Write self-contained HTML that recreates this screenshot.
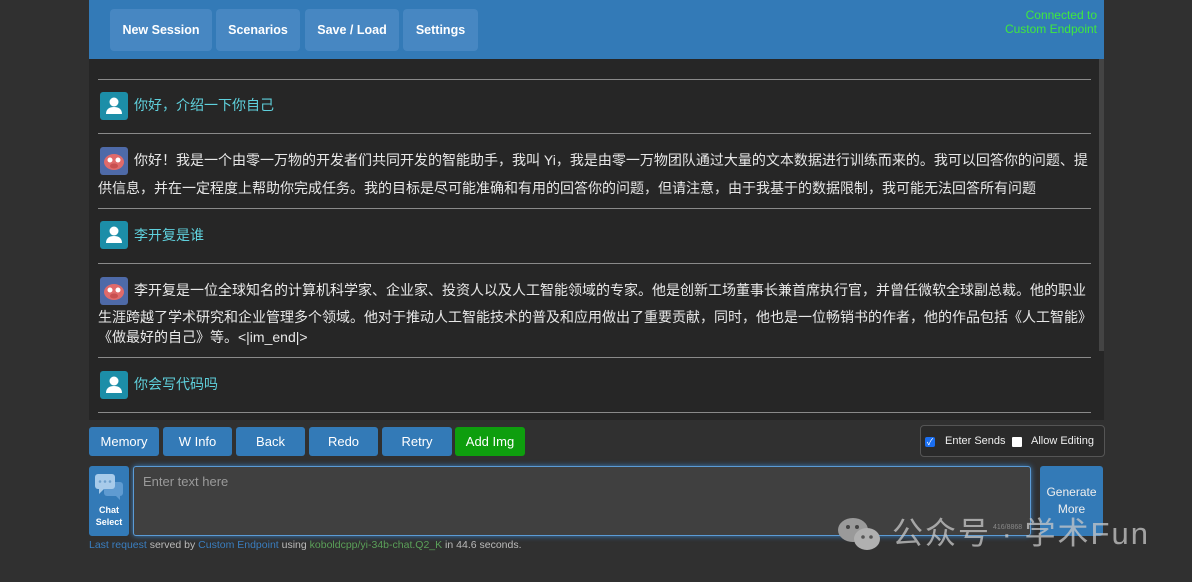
<!DOCTYPE html>
<html><head><meta charset="utf-8"><style>
*{margin:0;padding:0;box-sizing:border-box}
body{width:1192px;height:582px;background:#303030;font-family:"Liberation Sans","Noto Sans CJK SC",sans-serif;position:relative;overflow:hidden;color:#fff}
.a{position:absolute;white-space:nowrap}
.hdr{left:89px;top:0;width:1015px;height:59px;background:#337ab7}
.nb{top:9px;height:42px;background:#4787c2;border-radius:4px;color:#fff;font-weight:bold;font-size:12.5px;line-height:42px;text-align:center}
.chat{left:89px;top:59px;width:1015px;height:361px;background:#262626}
.hr{left:98px;width:993px;height:1px;background:#8a8a8a}
.t{font-size:14px;color:#e8e8e8;line-height:20px}
.u{font-size:14px;color:#5fd0dc;line-height:20px}
.av{width:28px;height:28px;border-radius:3px}
.ua{background:#1c8ea8}
.aa{background:#4e6aa8}
.bb{top:427px;height:29px;background:#337ab7;border-radius:3px;color:#fff;font-size:13px;line-height:29px;text-align:center}
</style></head><body>
<div class="a hdr"></div>
<div class="a nb" style="left:110px;width:102px">New Session</div>
<div class="a nb" style="left:216px;width:84px">Scenarios</div>
<div class="a nb" style="left:305px;width:94px">Save / Load</div>
<div class="a nb" style="left:403px;width:75px">Settings</div>
<div class="a" style="right:95px;top:8px;color:#3fe83f;font-size:12px;line-height:14px;text-align:right">Connected to<br>Custom Endpoint</div>
<div class="a chat"></div>
<div class="a" style="left:1099px;top:59px;width:5px;height:292px;background:#444"></div>
<div class="a hr" style="top:79px"></div>
<div class="a hr" style="top:133px"></div>
<div class="a hr" style="top:208px"></div>
<div class="a hr" style="top:263px"></div>
<div class="a hr" style="top:357px"></div>
<div class="a hr" style="top:412px"></div>

<svg class="a av ua" style="left:100px;top:92px" viewBox="0 0 28 28"><circle cx="14" cy="10" r="4.5" fill="#fff"/><path d="M6 22c0-5 3.5-7 8-7s8 2 8 7z" fill="#fff"/></svg>
<div class="a u" style="left:134px;top:95px">你好，介绍一下你自己</div>

<svg class="a av aa" style="left:100px;top:147px" viewBox="0 0 28 28"><ellipse cx="14" cy="15" rx="10" ry="8" fill="#e06a6a"/><circle cx="10" cy="13" r="2.5" fill="#fff"/><circle cx="18" cy="13" r="2.5" fill="#fff"/><ellipse cx="14" cy="19" rx="4" ry="2.5" fill="#c85050"/></svg>
<div class="a t" style="left:134px;top:150px">你好！我是一个由零一万物的开发者们共同开发的智能助手，我叫 Yi，我是由零一万物团队通过大量的文本数据进行训练而来的。我可以回答你的问题、提</div>
<div class="a t" style="left:98px;top:178px">供信息，并在一定程度上帮助你完成任务。我的目标是尽可能准确和有用的回答你的问题，但请注意，由于我基于的数据限制，我可能无法回答所有问题</div>

<svg class="a av ua" style="left:100px;top:221px" viewBox="0 0 28 28"><circle cx="14" cy="10" r="4.5" fill="#fff"/><path d="M6 22c0-5 3.5-7 8-7s8 2 8 7z" fill="#fff"/></svg>
<div class="a u" style="left:134px;top:225px">李开复是谁</div>

<svg class="a av aa" style="left:100px;top:277px" viewBox="0 0 28 28"><ellipse cx="14" cy="15" rx="10" ry="8" fill="#e06a6a"/><circle cx="10" cy="13" r="2.5" fill="#fff"/><circle cx="18" cy="13" r="2.5" fill="#fff"/><ellipse cx="14" cy="19" rx="4" ry="2.5" fill="#c85050"/></svg>
<div class="a t" style="left:134px;top:280px">李开复是一位全球知名的计算机科学家、企业家、投资人以及人工智能领域的专家。他是创新工场董事长兼首席执行官，并曾任微软全球副总裁。他的职业</div>
<div class="a t" style="left:98px;top:307px">生涯跨越了学术研究和企业管理多个领域。他对于推动人工智能技术的普及和应用做出了重要贡献，同时，他也是一位畅销书的作者，他的作品包括《人工智能》</div>
<div class="a t" style="left:98px;top:327px">《做最好的自己》等。&lt;|im_end|&gt;</div>

<svg class="a av ua" style="left:100px;top:371px" viewBox="0 0 28 28"><circle cx="14" cy="10" r="4.5" fill="#fff"/><path d="M6 22c0-5 3.5-7 8-7s8 2 8 7z" fill="#fff"/></svg>
<div class="a u" style="left:134px;top:374px">你会写代码吗</div>

<div class="a bb" style="left:89px;width:70px">Memory</div>
<div class="a bb" style="left:163px;width:69px">W Info</div>
<div class="a bb" style="left:236px;width:69px">Back</div>
<div class="a bb" style="left:309px;width:69px">Redo</div>
<div class="a bb" style="left:382px;width:70px">Retry</div>
<div class="a bb" style="left:455px;width:70px;background:#0e9e0e">Add Img</div>

<div class="a" style="left:920px;top:425px;width:185px;height:32px;border:1px solid #555;border-radius:4px;background:#2a2a2a"></div>
<div class="a" style="left:925px;top:437px;width:10px;height:10px;background:#1a6ef0;border-radius:2px;color:#fff;font-size:9px;line-height:10px;text-align:center">✓</div>
<div class="a" style="left:945px;top:435px;font-size:11px;color:#eee">Enter Sends</div>
<div class="a" style="left:1012px;top:437px;width:10px;height:10px;background:#fff;border-radius:1px"></div>
<div class="a" style="left:1031px;top:435px;font-size:11px;color:#eee">Allow Editing</div>

<div class="a" style="left:89px;top:466px;width:40px;height:70px;background:#337ab7;border-radius:3px"></div>
<svg class="a" style="left:94px;top:473px" width="32" height="30" viewBox="0 0 32 30"><rect x="10" y="9" width="19" height="14" rx="3" fill="#5f9bd1"/><path d="M22 23l4 4v-4z" fill="#5f9bd1"/><rect x="1" y="1" width="20" height="15" rx="3" fill="#a8cbea"/><path d="M5 16l0 5 5-5z" fill="#a8cbea"/><circle cx="6" cy="8.5" r="1.3" fill="#6fa0cc"/><circle cx="11" cy="8.5" r="1.3" fill="#6fa0cc"/><circle cx="16" cy="8.5" r="1.3" fill="#6fa0cc"/></svg>
<div class="a" style="left:89px;top:504px;width:40px;text-align:center;font-size:9px;font-weight:bold;line-height:12px;color:#fff">Chat<br>Select</div>

<div class="a" style="left:133px;top:466px;width:898px;height:70px;background:#404040;border:1px solid #5b9bd5;border-radius:3px;box-shadow:0 0 6px #3a7ec0"></div>
<div class="a" style="left:143px;top:474px;font-size:13px;color:#9a9a9a">Enter text here</div>
<div class="a" style="left:993px;top:524px;font-size:7px;color:#888">416/8868</div>

<div class="a" style="left:1040px;top:466px;width:63px;height:70px;background:#337ab7;border-radius:3px;color:#eee;font-size:12px;line-height:17px;text-align:center;padding-top:18px">Generate<br>More</div>

<div class="a" style="left:89px;top:539px;font-size:10.5px;color:#bbb"><span style="color:#3a7ec0">Last request</span> served by <span style="color:#3a7ec0">Custom Endpoint</span> using <span style="color:#5aa05a">koboldcpp/yi-34b-chat.Q2_K</span> in 44.6 seconds.</div>

<svg class="a" style="left:836px;top:515px" width="48" height="38" viewBox="0 0 48 38"><ellipse cx="17" cy="15" rx="15" ry="12" fill="#9a9a9a"/><ellipse cx="31" cy="24" rx="13" ry="11" fill="#b0b0b0"/><circle cx="12" cy="12" r="2" fill="#444"/><circle cx="21" cy="12" r="2" fill="#444"/><circle cx="27" cy="22" r="1.8" fill="#555"/><circle cx="35" cy="22" r="1.8" fill="#555"/></svg>
<div class="a" style="left:892px;top:514px;font-size:31px;letter-spacing:2px;color:rgba(200,200,200,0.75);line-height:40px">公众号 · 学术Fun</div>
</body></html>
